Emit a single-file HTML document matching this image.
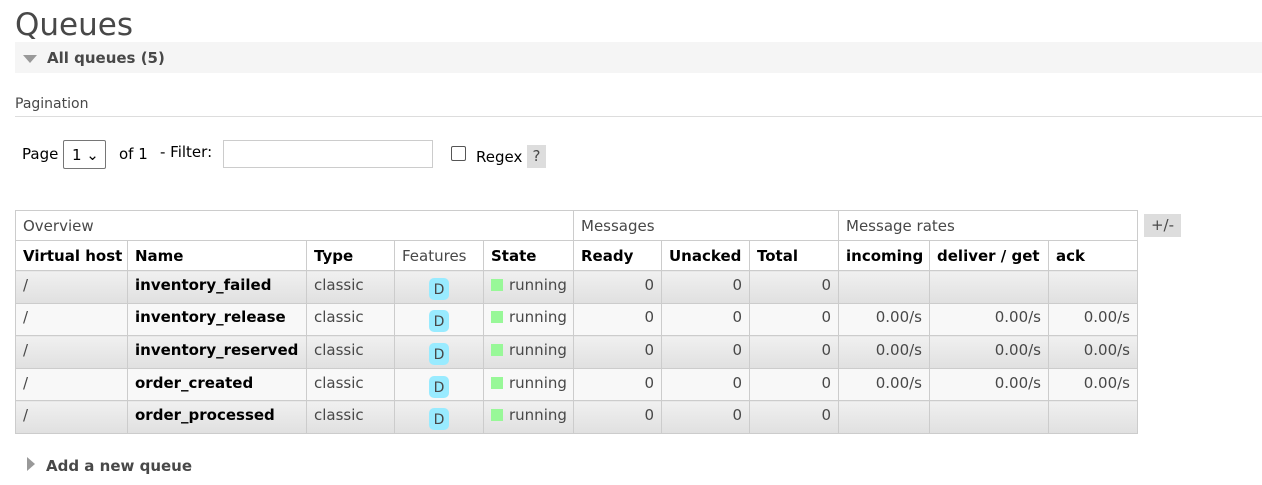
<!DOCTYPE html>
<html><head><style>
body{margin:0;background:#fff;font-family:"DejaVu Sans",Verdana,sans-serif;color:#484848;font-size:15px;width:1262px;height:485px;overflow:hidden;position:relative}
h1{position:absolute;left:15px;top:5px;margin:0;font-size:31px;font-weight:normal;color:#484848;line-height:40px}
.sec{position:absolute;left:15px;top:42px;width:1247px;height:31px;background:#f5f5f5}
.sec span{position:absolute;left:32px;top:7px;font-weight:bold;font-size:15px}
.tri{position:absolute;left:8px;top:13px;width:0;height:0;border-left:7px solid transparent;border-right:7px solid transparent;border-top:8px solid #999}
.pag{position:absolute;left:15px;top:96px;font-size:14px}
.hr{position:absolute;left:15px;top:116px;width:1247px;border-top:1px solid #ddd}
.sel{position:absolute;left:63px;top:140px;width:43px;height:29px;border:1px solid #767676;border-radius:2px;box-sizing:border-box;font-size:15px;color:#000;padding:5px 0 0 8px}
.inp{position:absolute;left:223px;top:140px;width:210px;height:28px;border:1px solid #ccc;box-sizing:border-box}
.cb{position:absolute;left:451px;top:146px;width:13px;height:13px;border:1px solid #555;border-radius:2px}
.q{position:absolute;left:527px;top:145px;width:19px;height:23px;background:#ddd;text-align:center;line-height:23px}
.t{position:absolute;font-size:15px;color:#000}
table{position:absolute;left:15px;top:210px;border-collapse:collapse;table-layout:fixed;width:1123px}
td,th{border:1px solid #ccc;padding:0 7px;height:29px;text-align:left;white-space:nowrap;font-size:15px}
th{color:#000;font-weight:bold;height:29px}
th.n{font-weight:normal;color:#484848}
tr.g td{font-weight:normal;color:#484848}
tr.r td{height:27.6px;padding-bottom:4px;line-height:18px}
tr.o td{background:linear-gradient(#f0f0f0,#e0e0e0)}
tr.e td{background:#f8f8f8}
td.nm{font-weight:bold;color:#000}
td.num{text-align:right}
.d{display:inline-block;width:20px;height:22px;background:#99ebff;border-radius:5px;text-align:center;line-height:24px;color:#484848;font-size:14px;vertical-align:middle;position:relative;top:4px}
.sq{display:inline-block;width:12px;height:12px;background:#98f898;margin-right:6px;vertical-align:-1px}
.pm{position:absolute;left:1144px;top:214px;width:37px;height:23px;background:#ddd;text-align:center;line-height:23px}
.add{position:absolute;left:46px;top:457px;font-weight:bold}
.tri2{position:absolute;left:27px;top:457px;width:0;height:0;border-top:7px solid transparent;border-bottom:7px solid transparent;border-left:8px solid #999}
</style></head><body>
<h1>Queues</h1>
<div class="sec"><div class="tri"></div><span>All queues (5)</span></div>
<div class="pag">Pagination</div><div class="hr"></div>
<div class="t" style="left:22px;top:145px">Page</div>
<div class="sel">1 &#8964;</div>
<div class="t" style="left:119px;top:145px">of 1</div>
<div class="t" style="left:160px;top:143px">- Filter:</div>
<div class="inp"></div>
<div class="cb"></div>
<div class="t" style="left:476px;top:148px">Regex</div>
<div class="q">?</div>
<table>
<colgroup><col style="width:112px"><col style="width:179px"><col style="width:88px"><col style="width:89px"><col style="width:90px"><col style="width:88px"><col style="width:88px"><col style="width:89px"><col style="width:91px"><col style="width:119px"><col style="width:89px"></colgroup>
<tr class="g"><td colspan="5">Overview</td><td colspan="3">Messages</td><td colspan="3">Message rates</td></tr>
<tr><th>Virtual host</th><th>Name</th><th>Type</th><th class="n">Features</th><th>State</th><th>Ready</th><th>Unacked</th><th>Total</th><th>incoming</th><th>deliver / get</th><th>ack</th></tr>
<tr class="r o"><td>/</td><td class="nm">inventory_failed</td><td>classic</td><td style="text-align:center"><span class="d">D</span></td><td><span class="sq"></span>running</td><td class="num">0</td><td class="num">0</td><td class="num">0</td><td></td><td></td><td></td></tr>
<tr class="r e"><td>/</td><td class="nm">inventory_release</td><td>classic</td><td style="text-align:center"><span class="d">D</span></td><td><span class="sq"></span>running</td><td class="num">0</td><td class="num">0</td><td class="num">0</td><td class="num">0.00/s</td><td class="num">0.00/s</td><td class="num">0.00/s</td></tr>
<tr class="r o"><td>/</td><td class="nm">inventory_reserved</td><td>classic</td><td style="text-align:center"><span class="d">D</span></td><td><span class="sq"></span>running</td><td class="num">0</td><td class="num">0</td><td class="num">0</td><td class="num">0.00/s</td><td class="num">0.00/s</td><td class="num">0.00/s</td></tr>
<tr class="r e"><td>/</td><td class="nm">order_created</td><td>classic</td><td style="text-align:center"><span class="d">D</span></td><td><span class="sq"></span>running</td><td class="num">0</td><td class="num">0</td><td class="num">0</td><td class="num">0.00/s</td><td class="num">0.00/s</td><td class="num">0.00/s</td></tr>
<tr class="r o"><td>/</td><td class="nm">order_processed</td><td>classic</td><td style="text-align:center"><span class="d">D</span></td><td><span class="sq"></span>running</td><td class="num">0</td><td class="num">0</td><td class="num">0</td><td></td><td></td><td></td></tr>
</table>
<div class="pm">+/-</div>
<div class="tri2"></div><div class="add">Add a new queue</div>
</body></html>
